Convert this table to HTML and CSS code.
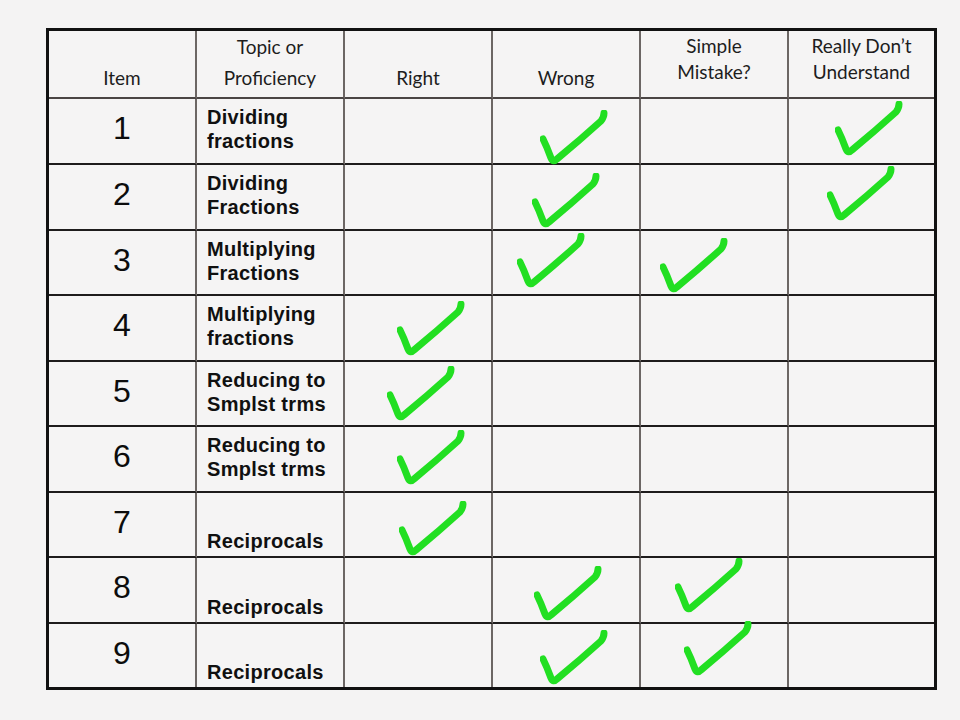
FILE: index.html
```html
<!DOCTYPE html>
<html lang="en">
<head>
<meta charset="utf-8">
<title>Test review sheet</title>
<link rel="stylesheet" href="styles.css">
</head>
<body>
<svg width="0" height="0" class="defs" aria-hidden="true">
  <defs>
    <symbol id="tick" viewBox="0 0 70 56">
      <path d="M3 29 Q7 37 11 48 Q13 53 17 49 Q40 30 61 11 Q64 7 64 3" fill="none" stroke="#22df22" stroke-width="7" stroke-linecap="round" stroke-linejoin="round"/>
    </symbol>
  </defs>
</svg>
<div class="sheet">
  <div class="cell head head-low">Item</div>
  <div class="cell head head-wide">Topic or<br>Proficiency</div>
  <div class="cell head head-low">Right</div>
  <div class="cell head head-low">Wrong</div>
  <div class="cell head head-tight">Simple<br>Mistake?</div>
  <div class="cell head head-tight last">Really Don’t<br>Understand</div>

  <div class="cell num">1</div>
  <div class="cell topic">Dividing<br>fractions</div>
  <div class="cell"></div>
  <div class="cell mark"><svg class="tick" style="--x:47px;--y:11px"><use href="#tick"/></svg></div>
  <div class="cell"></div>
  <div class="cell mark last"><svg class="tick" style="--x:46px;--y:2px"><use href="#tick"/></svg></div>

  <div class="cell num">2</div>
  <div class="cell topic">Dividing<br>Fractions</div>
  <div class="cell"></div>
  <div class="cell mark"><svg class="tick" style="--x:39px;--y:8px"><use href="#tick"/></svg></div>
  <div class="cell"></div>
  <div class="cell mark last"><svg class="tick" style="--x:38px;--y:1px"><use href="#tick"/></svg></div>

  <div class="cell num">3</div>
  <div class="cell topic">Multiplying<br>Fractions</div>
  <div class="cell"></div>
  <div class="cell mark"><svg class="tick" style="--x:24px;--y:2px"><use href="#tick"/></svg></div>
  <div class="cell mark"><svg class="tick" style="--x:19px;--y:7px"><use href="#tick"/></svg></div>
  <div class="cell last"></div>

  <div class="cell num">4</div>
  <div class="cell topic">Multiplying<br>fractions</div>
  <div class="cell mark"><svg class="tick" style="--x:52px;--y:5px"><use href="#tick"/></svg></div>
  <div class="cell"></div>
  <div class="cell"></div>
  <div class="cell last"></div>

  <div class="cell num">5</div>
  <div class="cell topic">Reducing to<br>Smplst trms</div>
  <div class="cell mark"><svg class="tick" style="--x:42px;--y:4px"><use href="#tick"/></svg></div>
  <div class="cell"></div>
  <div class="cell"></div>
  <div class="cell last"></div>

  <div class="cell num">6</div>
  <div class="cell topic">Reducing to<br>Smplst trms</div>
  <div class="cell mark"><svg class="tick" style="--x:52px;--y:3px"><use href="#tick"/></svg></div>
  <div class="cell"></div>
  <div class="cell"></div>
  <div class="cell last"></div>

  <div class="cell num">7</div>
  <div class="cell topic topic-low">Reciprocals</div>
  <div class="cell mark"><svg class="tick" style="--x:54px;--y:8px"><use href="#tick"/></svg></div>
  <div class="cell"></div>
  <div class="cell"></div>
  <div class="cell last"></div>

  <div class="cell num">8</div>
  <div class="cell topic topic-low">Reciprocals</div>
  <div class="cell"></div>
  <div class="cell mark"><svg class="tick" style="--x:41px;--y:8px"><use href="#tick"/></svg></div>
  <div class="cell mark"><svg class="tick" style="--x:34px;--y:0px"><use href="#tick"/></svg></div>
  <div class="cell last"></div>

  <div class="cell num bottom">9</div>
  <div class="cell topic topic-low bottom">Reciprocals</div>
  <div class="cell bottom"></div>
  <div class="cell mark bottom"><svg class="tick" style="--x:47px;--y:6px"><use href="#tick"/></svg></div>
  <div class="cell mark bottom"><svg class="tick" style="--x:43px;--y:-3px"><use href="#tick"/></svg></div>
  <div class="cell bottom last"></div>
</div>
</body>
</html>
```
FILE: styles.css
```css
html, body {
  margin: 0;
  padding: 0;
  background: #f4f3f3;
}

body {
  padding: 28px 0 0 46px;
  width: 960px;
  height: 720px;
  box-sizing: border-box;
  overflow: hidden;
}

.defs {
  position: absolute;
  width: 0;
  height: 0;
}

.sheet {
  box-sizing: border-box;
  width: 891px;
  height: 662px;
  border: 3px solid #111;
  display: grid;
  grid-template-columns: 148px 148px 148px 148px 148px 145px;
  grid-template-rows: 68px 66px 66px 65px 66px 65px 66px 65px 66px 63px;
  background: #f5f4f4;
}

.cell {
  position: relative;
  box-sizing: border-box;
  border-right: 2px solid #6c6664;
  border-bottom: 2px solid #1e1c1c;
  min-width: 0;
}

.cell.last {
  border-right: none;
}

.cell.bottom {
  border-bottom: none;
}

.head {
  border-bottom-color: #4a4544;
  font-family: Lato, "Liberation Sans", sans-serif;
  font-size: 19px;
  color: #1d1d1d;
  text-align: center;
}

.head-low {
  padding-top: 34px;
  line-height: 26px;
}

.head-wide {
  padding-top: 0;
  line-height: 31px;
}

.head-tight {
  padding-top: 2px;
  line-height: 26px;
}

.num {
  font-family: "Liberation Sans", Arial, sans-serif;
  font-size: 32px;
  line-height: 36px;
  padding-top: 11px;
  text-align: center;
  color: #0c0c0c;
}

.topic {
  font-family: "Liberation Sans", Arial, sans-serif;
  font-weight: bold;
  font-size: 20px;
  letter-spacing: 0.3px;
  line-height: 24px;
  padding: 6px 0 0 10px;
  color: #101010;
}

.topic-low {
  display: flex;
  align-items: flex-end;
  padding: 0 0 3px 10px;
}

.tick {
  position: absolute;
  left: var(--x);
  top: var(--y);
  width: 70px;
  height: 56px;
  overflow: visible;
  z-index: 2;
}
```
